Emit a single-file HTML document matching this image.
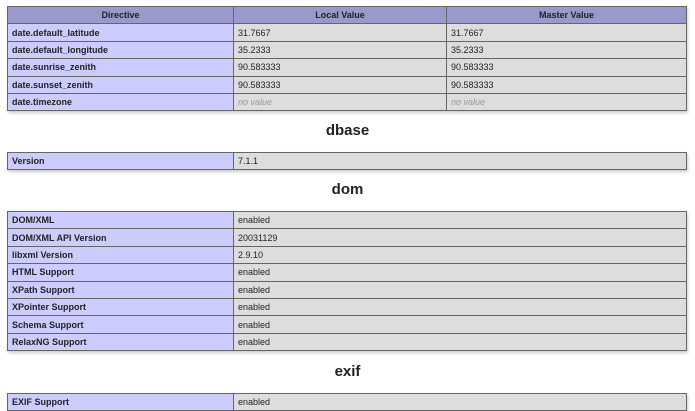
<!DOCTYPE html>
<html><head><style>
body{margin:0;background:#fff;font-family:"Liberation Sans",Arial,sans-serif;width:695px;height:410px;overflow:hidden;position:relative}
table{position:absolute;left:7px;width:680px;border-collapse:collapse;box-shadow:1px 2px 3px #ccc;table-layout:fixed}
td,th{border:1px solid #666;font-size:9px;padding:0 4px;height:16.4px;line-height:16px;color:#222;vertical-align:middle;overflow:hidden;white-space:nowrap}
th{background:#9999cc;font-weight:bold;text-align:center}
td.e{background:#ccccff;font-weight:bold;width:218px}
td.v{background:#ddd}
i{color:#999}
h2{position:absolute;left:0;width:695px;text-align:center;margin:0;font-size:15px;font-weight:bold;color:#222}
</style></head><body>
<table style="top:6px">
<colgroup><col style="width:226px"><col style="width:213px"><col></colgroup>
<tr><th>Directive</th><th>Local Value</th><th>Master Value</th></tr>
<tr><td class="e">date.default_latitude</td><td class="v">31.7667</td><td class="v">31.7667</td></tr>
<tr><td class="e">date.default_longitude</td><td class="v">35.2333</td><td class="v">35.2333</td></tr>
<tr><td class="e">date.sunrise_zenith</td><td class="v">90.583333</td><td class="v">90.583333</td></tr>
<tr><td class="e">date.sunset_zenith</td><td class="v">90.583333</td><td class="v">90.583333</td></tr>
<tr><td class="e">date.timezone</td><td class="v"><i>no value</i></td><td class="v"><i>no value</i></td></tr>
</table>
<h2 style="top:122px">dbase</h2>
<table style="top:152px">
<colgroup><col style="width:226px"><col></colgroup>
<tr><td class="e">Version</td><td class="v">7.1.1</td></tr>
</table>
<h2 style="top:181px">dom</h2>
<table style="top:211px">
<colgroup><col style="width:226px"><col></colgroup>
<tr><td class="e">DOM/XML</td><td class="v">enabled</td></tr>
<tr><td class="e">DOM/XML API Version</td><td class="v">20031129</td></tr>
<tr><td class="e">libxml Version</td><td class="v">2.9.10</td></tr>
<tr><td class="e">HTML Support</td><td class="v">enabled</td></tr>
<tr><td class="e">XPath Support</td><td class="v">enabled</td></tr>
<tr><td class="e">XPointer Support</td><td class="v">enabled</td></tr>
<tr><td class="e">Schema Support</td><td class="v">enabled</td></tr>
<tr><td class="e">RelaxNG Support</td><td class="v">enabled</td></tr>
</table>
<h2 style="top:363px">exif</h2>
<table style="top:393px">
<colgroup><col style="width:226px"><col></colgroup>
<tr><td class="e">EXIF Support</td><td class="v">enabled</td></tr>
</table>
</body></html>
